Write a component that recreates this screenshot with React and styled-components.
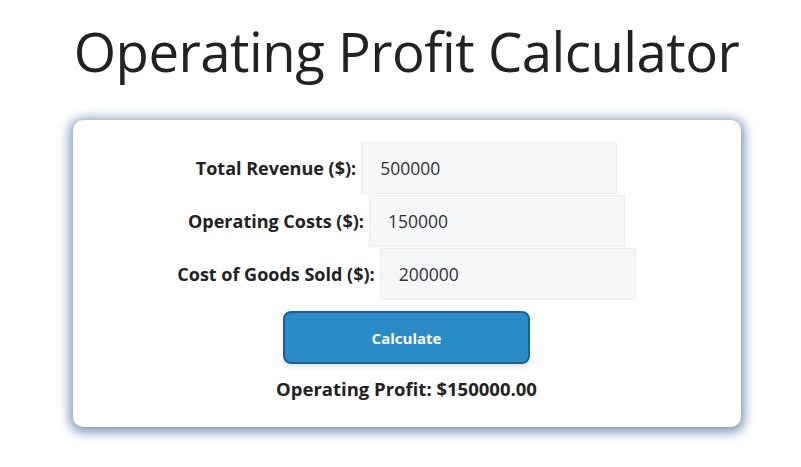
import React, { useState } from "react";
import styled, { createGlobalStyle } from "styled-components";

const GlobalStyle = createGlobalStyle`
  body {
    margin: 0;
    background: #ffffff;
    font-family: "Open Sans", "Noto Sans", sans-serif;
    color: #222;
  }
`;

const Page = styled.div`
  display: flex;
  flex-direction: column;
  align-items: center;
  padding-left: 12px;
  min-height: 467px;
`;

const Title = styled.h1`
  margin: 12px 0 0;
  height: 108px;
  font-size: 54.5px;
  line-height: 78px;
  font-weight: 400;
  color: #222;
  letter-spacing: -0.5px;
`;

const Card = styled.div`
  width: 668px;
  box-sizing: border-box;
  padding: 22px 0 0;
  height: 307px;
  background: #fff;
  border-radius: 10px;
  box-shadow: 0 2px 12px 3px rgba(60, 100, 145, 0.7);
  display: flex;
  flex-direction: column;
  align-items: center;
`;

const Row = styled.div`
  display: flex;
  align-items: center;
  justify-content: center;
  gap: 5px;
  margin-bottom: 1px;
`;

const Label = styled.label`
  font-weight: 700;
  font-size: 18px;
  color: #222;
`;

const Input = styled.input`
  width: 256px;
  height: 52px;
  box-sizing: border-box;
  padding: 0 18px;
  border: 1px solid #eceef1;
  background: #f6f7f9;
  font-family: inherit;
  font-size: 17.5px;
  color: #333;
  outline: none;
`;

const Button = styled.button`
  margin-top: 10px;
  width: 247px;
  height: 53px;
  border: 2px solid #1c5f9f;
  border-radius: 8px;
  background: #2a8cc7;
  color: #fff;
  font-family: inherit;
  font-weight: 700;
  font-size: 15px;
  box-shadow: 0 3px 5px rgba(0, 0, 0, 0.1);
  cursor: pointer;
`;

const Result = styled.div`
  margin-top: 12px;
  font-weight: 700;
  font-size: 18.5px;
  color: #222;
`;

const fields = [
  { key: "revenue", label: "Total Revenue ($):" },
  { key: "opCosts", label: "Operating Costs ($):" },
  { key: "cogs", label: "Cost of Goods Sold ($):" },
];

export default function App() {
  const [values, setValues] = useState({
    revenue: "500000",
    opCosts: "150000",
    cogs: "200000",
  });
  const [profit, setProfit] = useState(150000);

  const calc = () => {
    const r = parseFloat(values.revenue) || 0;
    const o = parseFloat(values.opCosts) || 0;
    const c = parseFloat(values.cogs) || 0;
    setProfit(r - o - c);
  };

  return (
    <>
      <GlobalStyle />
      <Page>
        <Title>Operating Profit Calculator</Title>
        <Card>
          {fields.map((f) => (
            <Row key={f.key}>
              <Label htmlFor={f.key}>{f.label}</Label>
              <Input
                id={f.key}
                type="text"
                value={values[f.key]}
                onChange={(e) => setValues({ ...values, [f.key]: e.target.value })}
              />
            </Row>
          ))}
          <Button onClick={calc}>Calculate</Button>
          <Result>Operating Profit: ${profit.toFixed(2)}</Result>
        </Card>
      </Page>
    </>
  );
}
